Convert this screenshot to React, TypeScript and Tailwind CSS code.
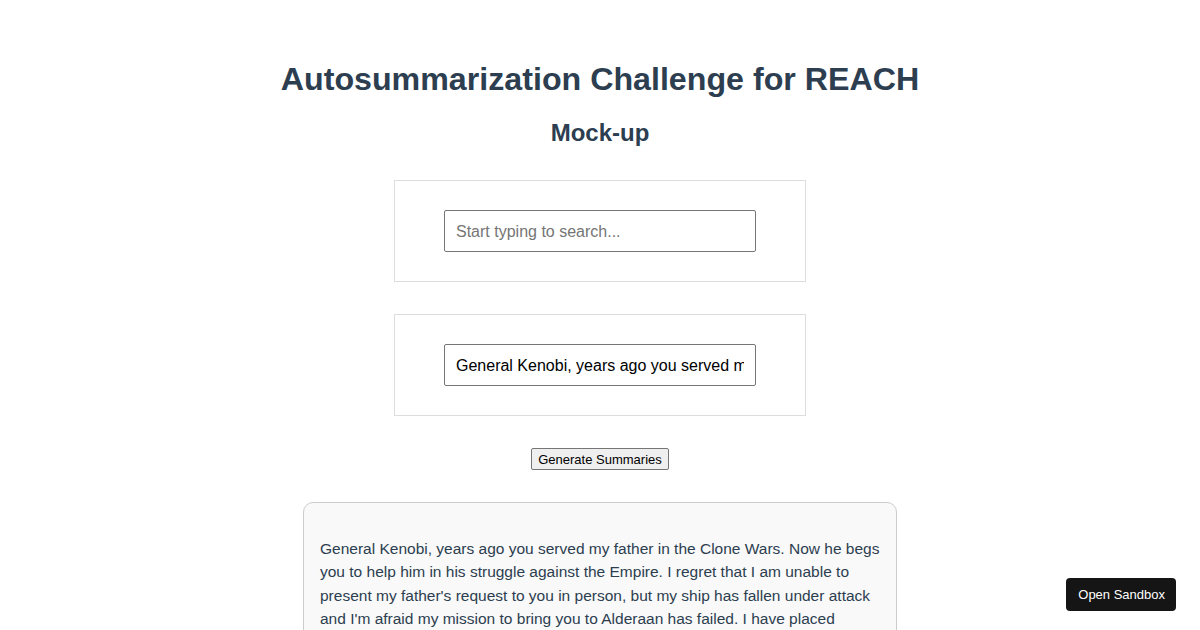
import { useState } from "react";

const message =
  "General Kenobi, years ago you served my father in the Clone Wars. Now he begs you to help him in his struggle against the Empire. I regret that I am unable to present my father's request to you in person, but my ship has fallen under attack and I'm afraid my mission to bring you to Alderaan has failed. I have placed information vital to the survival of the Rebellion into the memory systems of this R2 unit. My father will know how to retrieve it. You must see this droid safely delivered to him on Alderaan. This is our most desperate hour. Help me, Obi-Wan Kenobi. You're my only hope.";

export default function App() {
  const [query, setQuery] = useState("");
  const [text, setText] = useState(message);

  return (
    <div className="min-h-screen bg-white text-[#2c3e50] font-['Liberation_Sans',Arial,sans-serif]">
      <div className="flex flex-col items-center pt-[61px] pb-10">
        {/* Header */}
        <h1 className="text-[32.2px] leading-[37px] font-bold">
          Autosummarization Challenge for REACH
        </h1>
        <h2 className="mt-[21px] text-[24px] leading-[28px] font-bold">Mock-up</h2>

        {/* Search box */}
        <div className="mt-[33px] w-[412px] border border-[#dddddd] py-[29px] flex justify-center">
          <input
            value={query}
            onChange={(e) => setQuery(e.target.value)}
            placeholder="Start typing to search..."
            className="w-[312px] h-[42px] px-[11px] pt-[2px] border border-[#767676] rounded-[2px] text-[16px] text-black placeholder:text-[#757575] outline-none"
          />
        </div>

        {/* Document box */}
        <div className="mt-[32px] w-[412px] border border-[#dddddd] py-[29px] flex justify-center">
          <input
            value={text}
            onChange={(e) => setText(e.target.value)}
            className="w-[312px] h-[42px] px-[11px] pt-[2px] border border-[#767676] rounded-[2px] text-[16px] text-black outline-none"
          />
        </div>

        <button className="mt-[32px] h-[22px] px-[6px] bg-[#efefef] border border-[#767676] rounded-[2px] text-[13px] leading-none text-black">
          Generate Summaries
        </button>

        {/* Summary card */}
        <div className="mt-[32px] w-[594px] bg-[#f9f9f9] border border-[#cccccc] rounded-[10px] pt-[34px] pb-6 px-4">
          <p className="text-[15.5px] leading-[23.3px]">{message}</p>
        </div>
      </div>

      <button className="fixed right-[24px] bottom-[19px] h-[33px] pl-[12px] pr-[11px] bg-[#151515] rounded-[4px] text-white text-[13px]">
        Open Sandbox
      </button>
    </div>
  );
}
